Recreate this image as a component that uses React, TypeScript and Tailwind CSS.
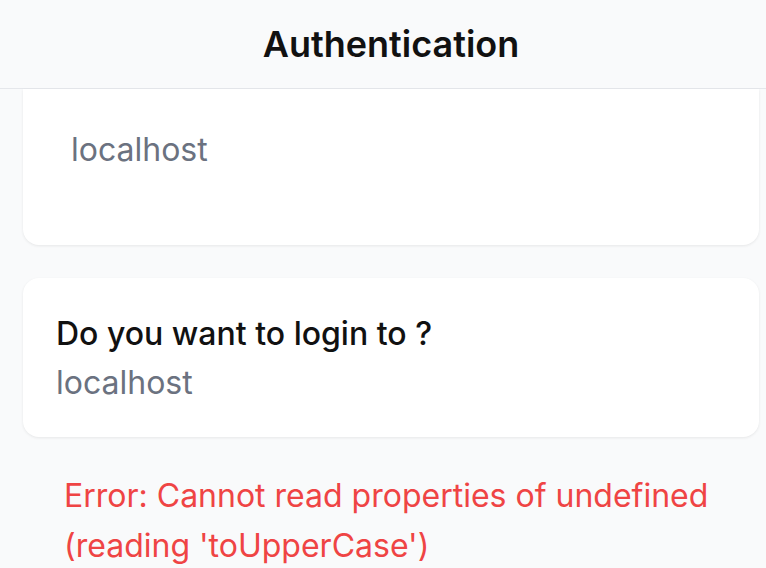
export default function App() {
  return (
    <div
      className="h-[568px] w-full overflow-hidden bg-[#f9fafb] text-[#111827]"
      style={{ fontFamily: "Inter, 'Noto Sans', sans-serif" }}
    >
      <header className="flex h-[89px] items-center justify-center border-b border-[#e5e7eb] bg-[#f9fafb] pl-[16px]">
        <h1 className="text-[36px] font-semibold text-[#111111]">Authentication</h1>
      </header>

      <main className="ml-[23px] mr-[7px] flex flex-col">
        {/* first card, scrolled under the header */}
        <section className="flex h-[156px] flex-col rounded-b-2xl bg-white px-[48px] pt-[40px] shadow-[0_1px_3px_rgba(0,0,0,0.08)]">
          <p className="text-[32px] leading-[42px] text-[#6b7280]">localhost</p>
        </section>

        <section className="mt-[33px] flex flex-col rounded-2xl bg-white px-[33px] pt-[31px] pb-[30px] shadow-[0_1px_3px_rgba(0,0,0,0.08)]">
          <p className="text-[32px] font-medium leading-[49px] text-[#111111]">Do you want to login to ?</p>
          <p className="text-[32px] leading-[49px] text-[#6b7280]">localhost</p>
        </section>

        <p className="mt-[34px] px-[41px] text-[32px] leading-[50px] text-[#ef4444]">
          Error: Cannot read properties of undefined (reading 'toUpperCase')
        </p>
      </main>
    </div>
  );
}
